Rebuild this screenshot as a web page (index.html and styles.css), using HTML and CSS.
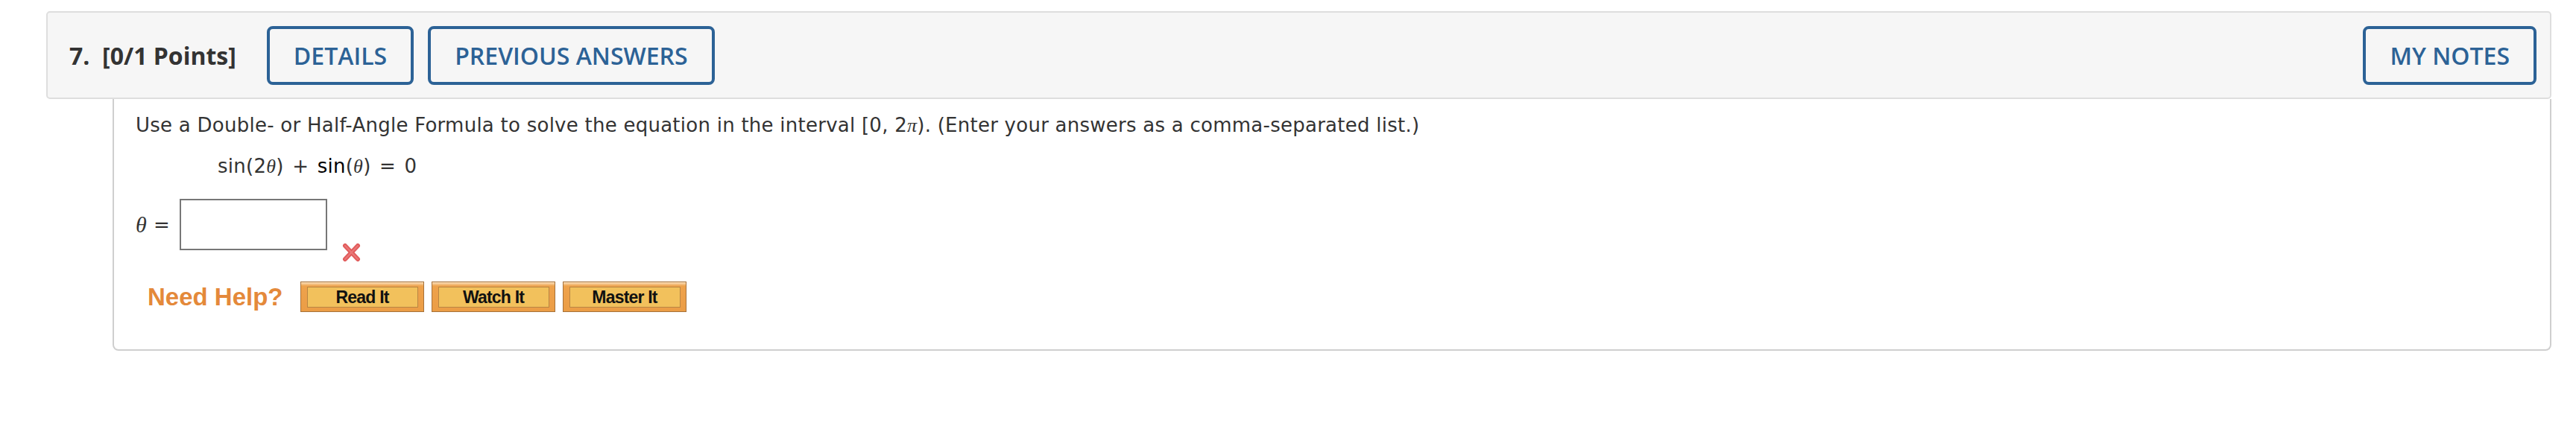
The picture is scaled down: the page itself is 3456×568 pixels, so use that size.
FILE: index.html
```html
<!DOCTYPE html>
<html lang="en">
<head>
    <meta charset="UTF-8">
    <meta name="viewport" content="width=device-width, initial-scale=1.0">
    <title>Question 7</title>
    <link rel="stylesheet" href="styles.css">
</head>
<body>
    <div class="question">
        <!-- Question header -->
        <div class="q-header">
            <div class="q-title">7.&nbsp; [0/1 Points]</div>
            <button class="q-btn">DETAILS</button>
            <button class="q-btn">PREVIOUS ANSWERS</button>
            <button class="q-btn notes">MY NOTES</button>
        </div>

        <!-- Question body -->
        <div class="q-body">
            <div class="prompt">Use a Double- or Half-Angle Formula to solve the equation in the interval [0, 2<span class="math">π</span>). (Enter your answers as a comma-separated list.)</div>
            <div class="equation">sin(2<span class="math">θ</span>) + <span class="dark">sin</span>(<span class="math">θ</span>) = 0</div>

            <div class="answer-row">
                <span class="math label">θ</span>
                <span class="eq">=</span>
                <input type="text" class="answer">
                <svg class="wrong" width="27" height="26" viewBox="0 0 27 26">
                    <path d="M5 4 L22 22 M22 4 L5 22" stroke="#e15b5b" stroke-width="6" stroke-linecap="round" fill="none"/>
                    <path d="M5 4 L22 22 M22 4 L5 22" stroke="#f08a8a" stroke-width="2" stroke-linecap="round" fill="none" opacity="0.6"/>
                </svg>
            </div>

            <div class="help-row">
                <span class="need-help">Need Help?</span>
                <button class="help-btn"><span>Read It</span></button>
                <button class="help-btn"><span>Watch It</span></button>
                <button class="help-btn"><span>Master It</span></button>
            </div>
        </div>
    </div>
</body>
</html>
```

FILE: styles.css
```css
body {
    margin: 0;
    padding: 15px 33px 0 62px;
    background-color: white;
    font-family: "Open Sans", Arial, sans-serif;
}
.q-header {
    display: flex;
    align-items: center;
    background-color: #f6f6f6;
    border: 2px solid #dedede;
    border-radius: 5px;
    padding: 18px 18px 17px 29px;
}
.q-title {
    font-size: 32px;
    font-weight: bold;
    color: #333;
    margin-right: 41px;
}
.q-btn {
    height: 79px;
    padding: 0 32px;
    margin-right: 19px;
    background: transparent;
    border: 4px solid #2c6296;
    border-radius: 8px;
    color: #2c6296;
    font-family: "Open Sans", Arial, sans-serif;
    font-size: 32px;
    font-weight: 600;
    cursor: pointer;
}
.q-btn.notes {
    margin-left: auto;
    margin-right: 0;
}
.q-body {
    margin-left: 89px;
    border: 2px solid #cfcfcf;
    border-top: none;
    border-radius: 0 0 8px 8px;
    padding: 20px 29px 50px 29px;
    font-family: "DejaVu Sans", Verdana, sans-serif;
    font-size: 26px;
    line-height: 30px;
    letter-spacing: 0.25px;
    color: #333;
}
.math {
    font-family: "Liberation Serif", "DejaVu Serif", serif;
    font-style: italic;
}
.dark {
    color: #000;
}
.equation {
    margin: 24px 0 0 110px;
    word-spacing: 3px;
}
.answer-row {
    display: flex;
    align-items: center;
    margin-top: 28px;
}
.answer-row .label {
    font-size: 30px;
    margin-right: 9px;
}
.answer-row .eq {
    margin-right: 13px;
}
.answer {
    width: 198px;
    height: 69px;
    box-sizing: border-box;
    border: 2px solid #777;
    margin: 0;
}
.wrong {
    align-self: flex-end;
    margin: 0 0 -16px 19px;
}
.help-row {
    display: flex;
    align-items: center;
    margin-top: 42px;
}
.need-help {
    font-family: "Liberation Sans", Arial, sans-serif;
    font-size: 33px;
    font-weight: bold;
    color: #e4893a;
    letter-spacing: 0;
    margin: 0 23px 0 16px;
}
.help-btn {
    width: 166px;
    height: 41px;
    padding: 6px 7px 5px 8px;
    margin-right: 10px;
    box-sizing: border-box;
    border: 1px solid #a6713a;
    background: linear-gradient(#fbe2bf 0, #eea24c 5px, #eb9d46 100%);
    cursor: pointer;
}
.help-btn span {
    display: block;
    height: 28px;
    box-sizing: border-box;
    border: 1px solid #b98543;
    background-color: #f2c15c;
    font-family: "Liberation Sans", Arial, sans-serif;
    font-size: 23px;
    font-weight: bold;
    line-height: 26px;
    letter-spacing: -0.8px;
    color: #111;
}
```
